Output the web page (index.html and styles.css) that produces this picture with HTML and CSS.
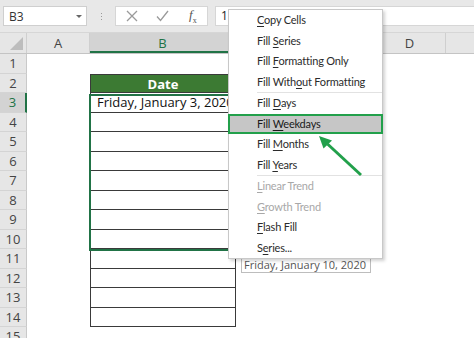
FILE: index.html
```html
<!DOCTYPE html>
<html lang="en">
<head>
    <meta charset="UTF-8">
    <meta name="viewport" content="width=device-width, initial-scale=1.0">
    <title>Fill Weekdays</title>
    <link rel="stylesheet" href="styles.css">
</head>
<body>
    <div class="app">
        <!-- Formula bar -->
        <div class="toolbar">
            <div class="namebox"><span>B3</span><span class="caret"></span></div>
            <div class="grip"><i></i><i></i><i></i></div>
            <div class="fx-buttons">
                <svg width="12" height="12" viewBox="0 0 12 12"><path d="M1 1 L11 11 M11 1 L1 11" stroke="#9a9a9a" stroke-width="1.3" fill="none"/></svg>
                <svg width="13" height="12" viewBox="0 0 13 12"><path d="M1 6.5 L4.5 10.5 L12 1" stroke="#9a9a9a" stroke-width="1.3" fill="none"/></svg>
                <span class="fx"><i>f</i><sub>x</sub></span>
            </div>
            <div class="formula">1</div>
        </div>

        <!-- Sheet -->
        <div class="sheet">
            <div class="row head-row">
                <div class="corner"><span></span></div>
                <div class="ch col-a">A</div>
                <div class="ch col-b selected">B</div>
                <div class="ch col-c"></div>
                <div class="ch col-d">D</div>
                <div class="ch col-e"></div>
            </div>
            <div class="row"><div class="rh">1</div><div class="cell col-a"></div><div class="cell col-b"></div></div>
            <div class="row"><div class="rh">2</div><div class="cell col-a"></div><div class="cell col-b tbl tbl-head">Date</div></div>
            <div class="row"><div class="rh active">3</div><div class="cell col-a"></div><div class="cell col-b tbl">Friday, January 3, 2020</div></div>
            <div class="row"><div class="rh">4</div><div class="cell col-a"></div><div class="cell col-b tbl"></div></div>
            <div class="row"><div class="rh">5</div><div class="cell col-a"></div><div class="cell col-b tbl"></div></div>
            <div class="row"><div class="rh">6</div><div class="cell col-a"></div><div class="cell col-b tbl"></div></div>
            <div class="row"><div class="rh">7</div><div class="cell col-a"></div><div class="cell col-b tbl"></div></div>
            <div class="row"><div class="rh">8</div><div class="cell col-a"></div><div class="cell col-b tbl"></div></div>
            <div class="row"><div class="rh">9</div><div class="cell col-a"></div><div class="cell col-b tbl"></div></div>
            <div class="row"><div class="rh">10</div><div class="cell col-a"></div><div class="cell col-b tbl"></div></div>
            <div class="row"><div class="rh">11</div><div class="cell col-a"></div><div class="cell col-b tbl"></div></div>
            <div class="row"><div class="rh">12</div><div class="cell col-a"></div><div class="cell col-b tbl"></div></div>
            <div class="row"><div class="rh">13</div><div class="cell col-a"></div><div class="cell col-b tbl"></div></div>
            <div class="row"><div class="rh">14</div><div class="cell col-a"></div><div class="cell col-b tbl"></div></div>
            <div class="row"><div class="rh">15</div><div class="cell col-a"></div><div class="cell col-b"></div></div>

            <!-- Selected range B3:B10 -->
            <div class="selection"></div>
        </div>

        <!-- Autofill preview tooltip -->
        <div class="fill-tip">Friday, January 10, 2020</div>

        <!-- Auto Fill options menu -->
        <ul class="menu">
            <li><u>C</u>opy Cells</li>
            <li>Fill <u>S</u>eries</li>
            <li>Fill <u>F</u>ormatting Only</li>
            <li>Fill With<u>o</u>ut Formatting</li>
            <li class="sep"></li>
            <li>Fill <u>D</u>ays</li>
            <li class="hover">Fill <u>W</u>eekdays</li>
            <li>Fill <u>M</u>onths</li>
            <li>Fill <u>Y</u>ears</li>
            <li class="sep"></li>
            <li class="disabled"><u>L</u>inear Trend</li>
            <li class="disabled"><u>G</u>rowth Trend</li>
            <li><u>F</u>lash Fill</li>
            <li>S<u>e</u>ries...</li>
        </ul>

        <!-- Callout arrow -->
        <svg class="arrow" width="55" height="50" viewBox="0 0 55 50">
            <line x1="49" y1="45" x2="15.5" y2="14" stroke="#22a04b" stroke-width="3"/>
            <polygon points="7,6 11.5,18.5 20,10.5" fill="#22a04b"/>
        </svg>
    </div>
</body>
</html>
```

FILE: styles.css
```css
/* Basic Reset */
* {
    margin: 0;
    padding: 0;
    box-sizing: border-box;
}

body {
    font-family: 'Open Sans', 'Noto Sans', sans-serif;
    background: #ffffff;
    color: #262626;
}

.app {
    position: relative;
    width: 474px;
    height: 338px;
    overflow: hidden;
}

/* Formula bar */
.toolbar {
    height: 33px;
    background: #e8e8e8;
    border-bottom: 1px solid #d6d6d6;
    display: flex;
    align-items: center;
    padding: 0 0 0 3px;
}

.namebox {
    width: 84px;
    height: 20px;
    background: #ffffff;
    border: 1px solid #cfcfcf;
    display: flex;
    align-items: center;
    justify-content: space-between;
    padding: 0 4px 0 5px;
    font-size: 12px;
    color: #333;
}

.caret {
    width: 0;
    height: 0;
    border-left: 3px solid transparent;
    border-right: 3px solid transparent;
    border-top: 3px solid #666;
}

.grip {
    width: 28px;
    display: flex;
    flex-direction: column;
    align-items: center;
    gap: 2px;
}

.grip i {
    width: 1px;
    height: 1px;
    background: #9a9a9a;
}

.fx-buttons {
    width: 93px;
    height: 20px;
    background: #ffffff;
    border: 1px solid #d6d6d6;
    display: flex;
    align-items: center;
    gap: 18px;
    padding-left: 10px;
}

.fx {
    font-family: 'Liberation Serif', serif;
    font-size: 13px;
    color: #555;
    margin-left: 2px;
}

.fx sub {
    font-size: 8px;
}

.formula {
    flex: 1;
    height: 20px;
    margin-left: 7px;
    background: #ffffff;
    border: 1px solid #d6d6d6;
    border-right: none;
    font-size: 12px;
    line-height: 18px;
    padding-left: 5px;
    color: #222;
}

/* Sheet */
.sheet {
    position: relative;
}

.row {
    display: flex;
    height: 19.5px;
}

.head-row {
    height: 21px;
    background: #e6e6e6;
    border-bottom: 1px solid #c4c4c4;
}

.corner {
    width: 27px;
    border-right: 1px solid #cfcfcf;
    position: relative;
}

.corner span {
    position: absolute;
    right: 3px;
    bottom: 3px;
    width: 0;
    height: 0;
    border-left: 13px solid transparent;
    border-bottom: 13px solid #bdbdbd;
}

.ch {
    font-size: 13px;
    color: #444;
    text-align: center;
    line-height: 21px;
    border-right: 1px solid #cfcfcf;
}

.ch.selected {
    background: #d3d3d3;
    color: #217346;
    border-bottom: 2px solid #217346;
}

.col-a { width: 63px; }
.col-b { width: 146px; }
.col-c { width: 138px; }
.col-d { width: 72px; }
.col-e { flex: 1; border-right: none; }

.rh {
    width: 27px;
    background: #e6e6e6;
    border-right: 1px solid #c9c9c9;
    border-bottom: 1px solid #d4d4d4;
    font-size: 13px;
    color: #444;
    text-align: center;
    line-height: 19px;
}

.rh.active {
    background: #d3d3d3;
    color: #217346;
    border-right: 2px solid #217346;
}

.cell {
    height: 100%;
}

.cell.tbl {
    border-left: 1px solid #3a3a3a;
    border-right: 1px solid #3a3a3a;
    border-bottom: 1px solid #3a3a3a;
    font-size: 13px;
    line-height: 18px;
    padding-left: 6px;
    white-space: nowrap;
    overflow: hidden;
    color: #111;
}

.cell.tbl-head {
    background: #3c7a33;
    border-top: 1px solid #3a3a3a;
    color: #ffffff;
    font-weight: 700;
    text-align: center;
    padding-left: 0;
}

.selection {
    position: absolute;
    left: 89px;
    top: 60.5px;
    width: 148px;
    height: 157px;
    border: 2px solid #217346;
}

/* Autofill tooltip */
.fill-tip {
    position: absolute;
    left: 241px;
    top: 256px;
    width: 130px;
    height: 17px;
    background: #ffffff;
    border: 1px solid #bdbdbd;
    font-size: 11px;
    line-height: 15px;
    padding-left: 2px;
    color: #555;
}

/* Auto Fill options menu */
.menu {
    position: absolute;
    left: 228px;
    top: 9px;
    width: 155px;
    list-style: none;
    background: #ffffff;
    border: 1px solid #c8c8c8;
    box-shadow: 2px 2px 3px rgba(0, 0, 0, 0.18);
    font-family: Lato, 'Open Sans', sans-serif;
    font-size: 11px;
    letter-spacing: -0.2px;
    color: #2b2b2b;
}

.menu li {
    height: 20.5px;
    line-height: 20.5px;
    padding-left: 28px;
    white-space: nowrap;
}

.menu li.sep {
    height: 1px;
    margin-left: 28px;
    padding: 0;
    background: #e2e2e2;
}

.menu li.hover {
    margin-left: -1px;
    margin-right: -1px;
    padding-left: 27px;
    background: #c6c6c6;
    border: 2px solid #22a04b;
    line-height: 16.5px;
    color: #1a1a1a;
}

.menu li.disabled {
    color: #a8a8a8;
}

.menu u {
    text-decoration-thickness: 1px;
    text-underline-offset: 2px;
}

.arrow {
    position: absolute;
    left: 312px;
    top: 130px;
}
```
